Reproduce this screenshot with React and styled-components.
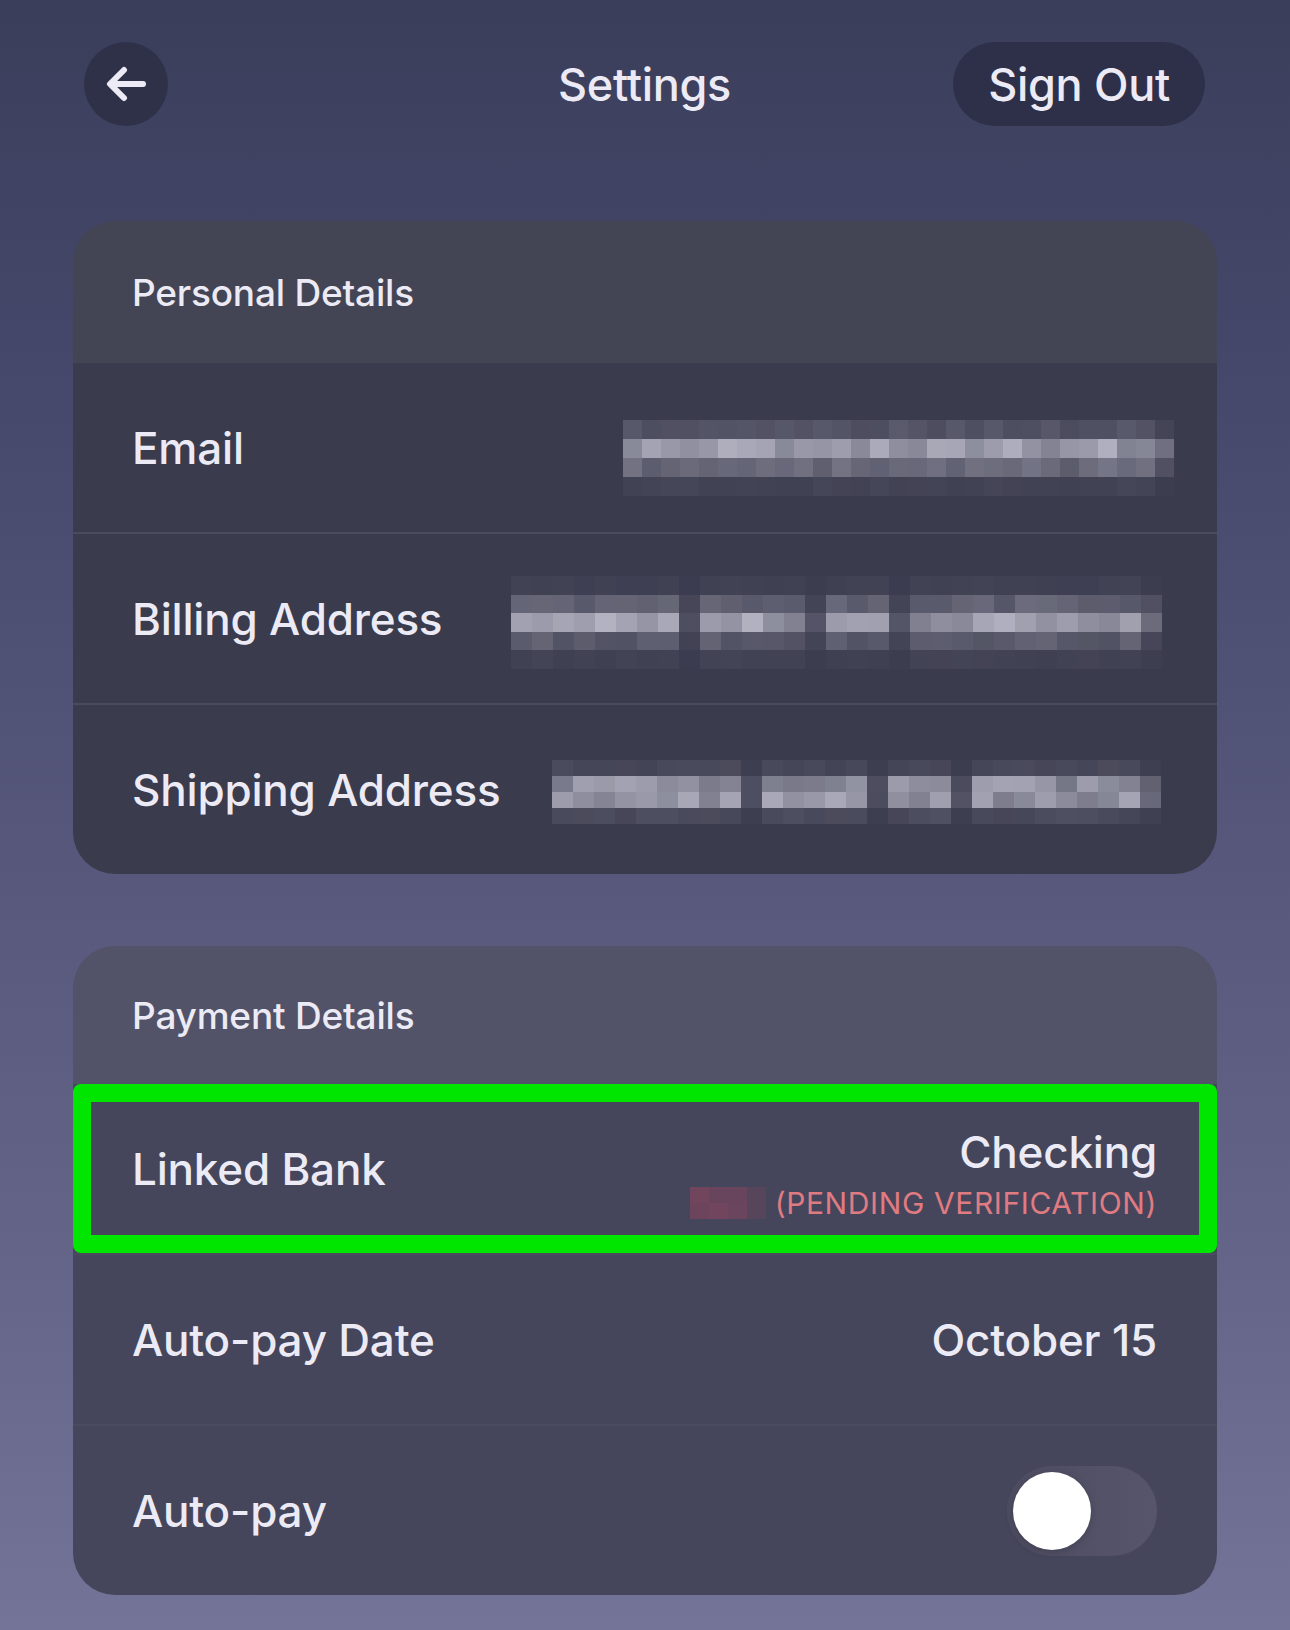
import React from 'react';
import styled, { createGlobalStyle } from 'styled-components';

const GlobalStyle = createGlobalStyle`
  html, body {
    margin: 0;
    padding: 0;
  }
  body {
    font-family: Inter, "Noto Sans", sans-serif;
    color: #ecebf5;
    background: linear-gradient(180deg, #3b3e5a 0%, #45486b 22%, #56577b 50%, #65658a 75%, #77779b 100%);
    min-height: 1630px;
    -webkit-font-smoothing: antialiased;
  }
`;

// deterministic noise so the blurred blocks look the same each render
const noise = (seed, i) => {
  const x = Math.sin(seed * 97.13 + i * 12.9898) * 43758.5453;
  return x - Math.floor(x);
};

const Mosaic = ({ cols, rows, cw, ch, profile, gaps = [], seed = 1, tint = '200, 199, 214', bleed = 0, shift = 0 }) => {
  const cells = [];
  for (let r = 0; r < rows; r++) {
    for (let c = 0; c < cols; c++) {
      const i = r * cols + c;
      let a = profile[r] * (0.55 + 0.45 * noise(seed, i));
      if (gaps.includes(c)) a *= 0.25;
      if (c === cols - 1) a *= 0.45;
      cells.push(<Cell key={i} style={{ background: `rgba(${tint}, ${a.toFixed(3)})` }} />);
    }
  }
  return (
    <MosaicGrid $cols={cols} $rows={rows} $cw={cw} $ch={ch} $bleed={bleed} $shift={shift}>
      {cells}
    </MosaicGrid>
  );
};

const BackIcon = () => (
  <svg width="40" height="36" viewBox="0 0 40 36" fill="none">
    <path d="M37 18H5M18 4L4 18l14 14" stroke="#ecebf5" strokeWidth="6" strokeLinecap="round" strokeLinejoin="round" />
  </svg>
);

const App = () => {
  return (
    <>
      <GlobalStyle />
      <Page>
        <TopBar>
          <BackButton aria-label="Back">
            <BackIcon />
          </BackButton>
          <Title>Settings</Title>
          <SignOut>Sign Out</SignOut>
        </TopBar>

        <Card>
          <CardHeader $tone="#434454" $height={142}>Personal Details</CardHeader>
          <Rows $tone="#3a3b4d">
            <Row>
              <Label>Email</Label>
              <Mosaic cols={29} rows={4} cw={19} ch={19} profile={[0.22, 0.85, 0.42, 0.08]} seed={3} bleed={-17} shift={20} />
            </Row>
            <Row>
              <Label>Billing Address</Label>
              <Mosaic cols={31} rows={5} cw={21} ch={18.5} profile={[0.06, 0.35, 0.85, 0.3, 0.07]} gaps={[8, 14, 18]} seed={7} bleed={-5} shift={8} />
            </Row>
            <Row>
              <Label>Shipping Address</Label>
              <Mosaic cols={29} rows={4} cw={21} ch={16} profile={[0.12, 0.75, 0.8, 0.15]} gaps={[9, 15, 19]} seed={11} bleed={-4} shift={4} />
            </Row>
          </Rows>
        </Card>

        <Card>
          <CardHeader $tone="#525268" $height={138}>Payment Details</CardHeader>
          <Rows $tone="#45455b">
            <Row $highlight>
              <Label>Linked Bank</Label>
              <ValueStack>
                <Value>Checking</Value>
                <Pending>
                  <Mosaic cols={4} rows={2} cw={19} ch={16} profile={[0.55, 0.65]} seed={5} tint="150, 70, 95" />
                  <PendingText>(PENDING VERIFICATION)</PendingText>
                </Pending>
              </ValueStack>
            </Row>
            <Row>
              <Label>Auto-pay Date</Label>
              <Value>October 15</Value>
            </Row>
            <Row>
              <Label>Auto-pay</Label>
              <Toggle role="switch" aria-checked="false">
                <Knob />
              </Toggle>
            </Row>
          </Rows>
        </Card>
      </Page>
    </>
  );
};

const Page = styled.main`
  padding: 42px 73px 35px;
`;

const TopBar = styled.header`
  display: grid;
  grid-template-columns: 1fr auto 1fr;
  align-items: center;
  padding: 0 12px 0 11px;
  margin-bottom: 95px;
`;

const BackButton = styled.button`
  justify-self: start;
  width: 84px;
  height: 84px;
  border: none;
  border-radius: 50%;
  background: #2f3149;
  display: flex;
  align-items: center;
  justify-content: center;
  padding: 0;
  cursor: pointer;
`;

const Title = styled.h1`
  margin: 0;
  font-size: 45px;
  font-weight: 500;
  letter-spacing: -0.3px;
`;

const SignOut = styled.button`
  justify-self: end;
  height: 84px;
  padding: 0 35px;
  border: none;
  border-radius: 42px;
  background: #2e3049;
  color: #ecebf5;
  font-family: inherit;
  font-size: 45px;
  font-weight: 500;
  letter-spacing: -0.3px;
  cursor: pointer;
`;

const Card = styled.section`
  border-radius: 42px;
  overflow: hidden;
  margin-bottom: 72px;
`;

const CardHeader = styled.h2`
  margin: 0;
  height: ${({ $height }) => $height}px;
  display: flex;
  align-items: center;
  padding: 0 59px;
  background: ${({ $tone }) => $tone};
  font-size: 37px;
  font-weight: 450;
  letter-spacing: -0.2px;
`;

const Rows = styled.div`
  background: ${({ $tone }) => $tone};
`;

const Row = styled.div`
  height: 169px;
  display: flex;
  align-items: center;
  justify-content: space-between;
  padding: 0 60px 0 59px;
  border-radius: ${({ $highlight }) => ($highlight ? '8px' : '0')};
  box-shadow: ${({ $highlight }) => ($highlight ? 'inset 0 0 0 18px #00e600' : 'none')};

  & + & {
    border-top: 2px solid #4b4b60;
  }
`;

const Label = styled.span`
  font-size: 44px;
  font-weight: 500;
  letter-spacing: -0.2px;
  white-space: nowrap;
`;

const Value = styled.span`
  font-size: 44px;
  font-weight: 500;
  letter-spacing: -0.2px;
`;

const ValueStack = styled.div`
  display: flex;
  flex-direction: column;
  align-items: flex-end;
  gap: 6px;
  margin-top: 8px;
`;

const Pending = styled.div`
  display: flex;
  align-items: center;
  gap: 9px;
`;

const PendingText = styled.span`
  font-size: 30px;
  font-weight: 400;
  color: #e07b82;
  letter-spacing: 0.6px;
`;

const MosaicGrid = styled.div`
  display: grid;
  grid-template-columns: repeat(${({ $cols }) => $cols}, ${({ $cw }) => $cw}px);
  grid-template-rows: repeat(${({ $rows }) => $rows}, ${({ $ch }) => $ch}px);
  margin-right: ${({ $bleed }) => $bleed}px;
  margin-top: ${({ $shift }) => $shift}px;
  filter: blur(0.6px);
`;

const Cell = styled.div``;

const Toggle = styled.div`
  width: 150px;
  height: 90px;
  border-radius: 45px;
  background: linear-gradient(90deg, #4d4c61 0%, #56556b 100%);
  display: flex;
  align-items: center;
  padding: 0 6px;
  box-sizing: border-box;
`;

const Knob = styled.div`
  width: 78px;
  height: 78px;
  border-radius: 50%;
  background: #ffffff;
  box-shadow: 0 2px 8px rgba(0, 0, 0, 0.18);
`;

export default App;
